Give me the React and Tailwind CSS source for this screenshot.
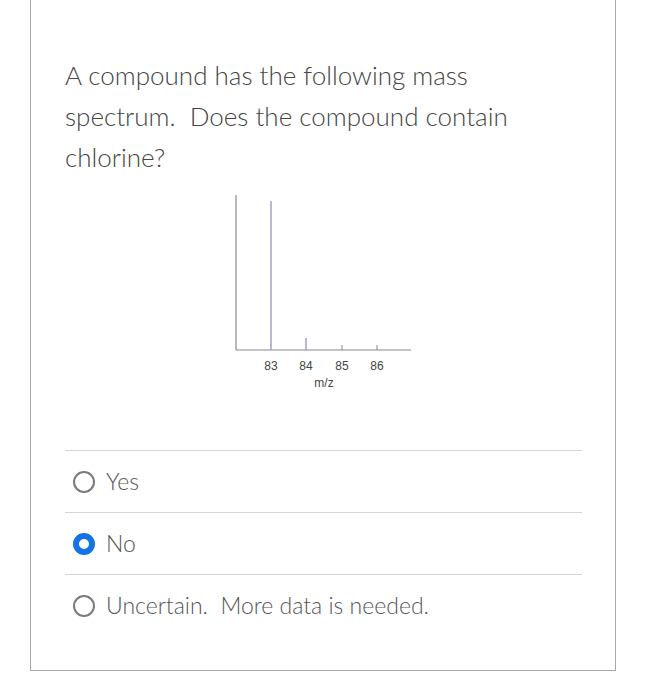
import { useState } from "react";

const options = ["Yes", "No", "Uncertain.  More data is needed."];

function Spectrum() {
  return (
    <svg width="180" height="210" viewBox="0 0 180 210">
      <line x1="2" y1="5" x2="2" y2="160" stroke="#8a8a8a" strokeWidth="1.2" />
      <line x1="2" y1="160" x2="177" y2="160" stroke="#8a8a8a" strokeWidth="1.2" />
      <line x1="37" y1="11" x2="37" y2="160" stroke="#9a9ad0" strokeWidth="1.4" />
      <line x1="72" y1="148" x2="72" y2="160" stroke="#9a9ad0" strokeWidth="1.4" />
      <line x1="108" y1="155" x2="108" y2="160" stroke="#8a8a8a" strokeWidth="1" />
      <line x1="143" y1="155" x2="143" y2="160" stroke="#8a8a8a" strokeWidth="1" />
      <g fill="#444" fontSize="12" fontFamily="'Liberation Sans', Arial, sans-serif" textAnchor="middle">
        <text x="37" y="180">83</text>
        <text x="72" y="180">84</text>
        <text x="108" y="180">85</text>
        <text x="143" y="180">86</text>
        <text x="90" y="197">m/z</text>
      </g>
    </svg>
  );
}

export default function App() {
  const [choice, setChoice] = useState(1);

  return (
    <div className="w-[660px] h-[700px] bg-white" style={{ fontFamily: "Lato, 'Open Sans', sans-serif" }}>
      <div className="ml-[30px] w-[586px] h-[671px] border-x border-b border-[#a9a9a9] pl-[34px] pr-[33px] pt-[55px]">
        <p className="text-[26px] leading-[41px] text-[#444] font-light">
          A compound has the following mass spectrum.&nbsp; Does the compound contain chlorine?
        </p>
        <div className="flex justify-center mt-[12px]">
          <Spectrum />
        </div>
        <div className="mt-[50px]">
          {options.map((opt, i) => (
            <label
              key={opt}
              onClick={() => setChoice(i)}
              className="flex items-center h-[62px] border-t border-[#d6d6d6] cursor-pointer"
            >
              {choice === i ? (
                <span className="w-[22px] h-[22px] rounded-full border-[6px] border-[#1473e6] bg-white ml-[8px]" />
              ) : (
                <span className="w-[22px] h-[22px] rounded-full border-2 border-[#7a7a7a] bg-white ml-[8px]" />
              )}
              <span className="ml-[11px] text-[23px] text-[#555] font-light whitespace-pre">{opt}</span>
            </label>
          ))}
        </div>
      </div>
    </div>
  );
}
